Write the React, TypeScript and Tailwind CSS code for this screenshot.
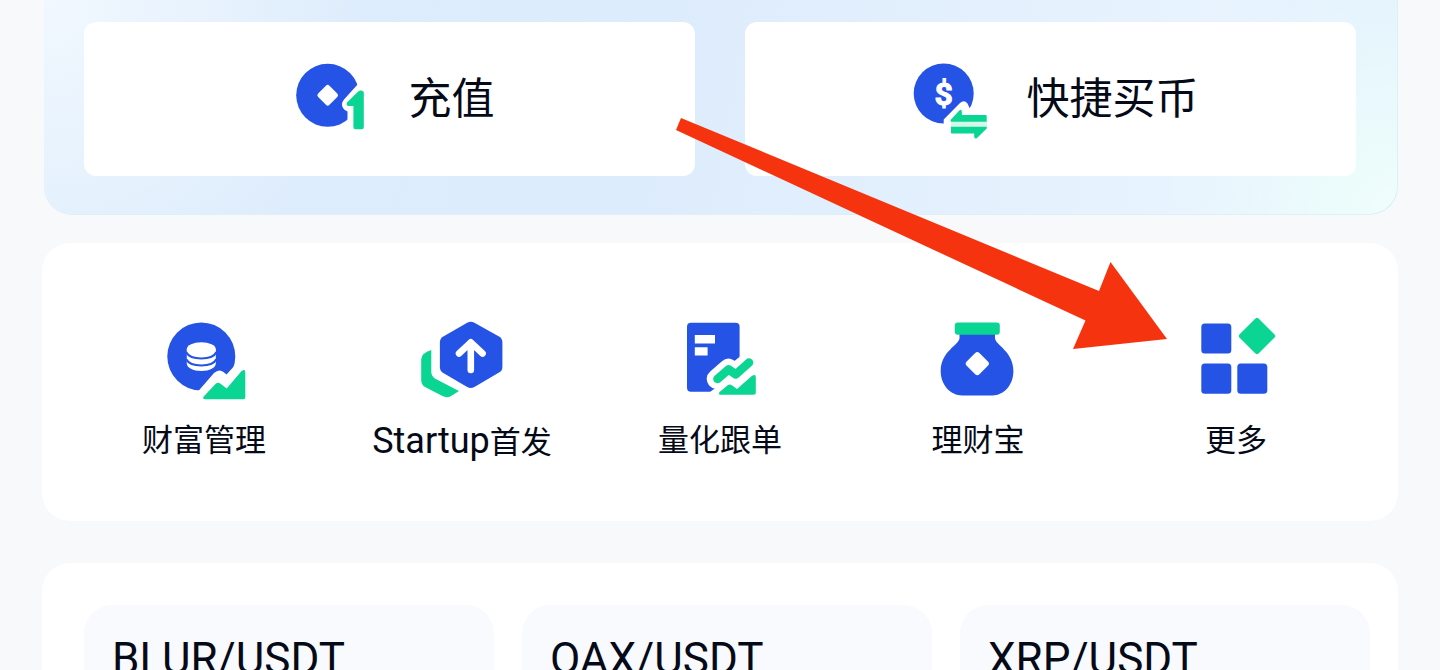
import type { ReactNode } from "react";

const BLUE = "#2453e6";
const GREEN = "#0bd592";

interface IconProps {
  children: ReactNode;
}

function ActionIcon({ children }: IconProps) {
  return (
    <svg className="size-[84px] shrink-0" viewBox="0 0 84 84" fill="none" aria-hidden="true">
      {children}
    </svg>
  );
}

function ShortcutIcon({ children }: IconProps) {
  return (
    <svg className="size-[90px]" viewBox="0 0 90 90" fill="none" aria-hidden="true">
      {children}
    </svg>
  );
}

function DepositIcon() {
  return (
    <ActionIcon>
      <circle cx="42.7" cy="38.3" r="31.5" fill={BLUE} />
      <rect x="34.7" y="30.3" width="16" height="16" rx="2.5" transform="rotate(45 42.7 38.3)" fill="#fff" />
      <path d="M73 27 59 42.5Q55.5 47 58 51Q60 54 62.5 54.5V76H84V27Z" fill="#fff" />
      <path d="M62.2 45.2 73 34.8Q74.3 33.5 76 33.5Q78.8 33.5 78.8 36V70Q78.8 72.2 76.8 72.2H70.4Q68.4 72.2 68.4 70V49H63.4Q60.4 48 62.2 45.2Z" fill={GREEN} />
    </ActionIcon>
  );
}

function QuickBuyIcon() {
  return (
    <ActionIcon>
      <circle cx="40.7" cy="36.5" r="30" fill={BLUE} />
      <text x="40.7" y="47.5" fill="#fff" stroke="#fff" strokeWidth="1" fontSize="32" fontWeight="700" textAnchor="middle" className="font-['Roboto',sans-serif]">
        $
      </text>
      <path d="M40.7 68V62.5L57 46Q61 42.5 64.5 46.5L68 54H84V68Z" fill="#fff" />
      <path d="M48 64H84V71H48Z" fill="#d5f8eb" />
      <path d="M48 62.6 56.3 53.6Q58.6 51.6 58.9 55V58H82.6Q83.7 58 83.7 59.2V64.8H48.8Q46.6 64.4 48 62.6Z" fill={GREEN} />
      <path d="M48 69.8H83.7V71.6L74 81Q71.4 82.6 71.2 79.4V76.6H49.2Q48 76.6 48 75.4Z" fill={GREEN} />
    </ActionIcon>
  );
}

function WealthIcon() {
  return (
    <ShortcutIcon>
      <circle cx="42.3" cy="41.5" r="34" fill={BLUE} />
      <path d="M27.8 34.5V48.5C27.8 52.8 34 56 42.3 56S56.8 52.8 56.8 48.5V34.5Z" fill="#fff" />
      <ellipse cx="42.3" cy="34.3" rx="14.5" ry="7" fill="#fff" />
      <path d="M27.3 37.2C29.5 41.8 35 43.4 42.3 43.4S55.1 41.8 57.3 37.2M27.3 44.2C29.5 48.8 35 50.4 42.3 50.4S55.1 48.8 57.3 44.2" stroke={BLUE} strokeWidth="2" />
      <path d="M38.5 77 55 58Q60 53.5 64.5 57L67.5 59.5 77.5 48.5H90V84H45Z" fill="#fff" />
      <path d="M44.7 81.5 56.5 69Q58.8 66.6 61.2 68.4L67.7 73.5 82.6 56Q86.3 53.4 86.3 57.4V82.3Q86.3 84.3 84.3 84.3H46.2Q43 84 44.7 81.5Z" fill={GREEN} />
    </ShortcutIcon>
  );
}

function StartupIcon() {
  return (
    <ShortcutIcon>
      <path d="M50.2 7.7Q53.8 5.7 57.4 7.7L82 21.6Q85.4 23.6 85.4 27.4V52Q85.4 55.6 82 57.6L57.4 72Q53.8 74 50.2 72L26.3 58Q22.9 56 22.9 52.2V27.2Q22.9 23.4 26.3 21.4Z" fill={BLUE} />
      <path d="M53.8 55V27.5M42 38.5 53.8 27.3 65.6 38.5" stroke="#fff" strokeWidth="6.6" strokeLinecap="round" strokeLinejoin="round" />
      <path d="M14.3 35Q4.2 38 4.2 44.5V65Q4.2 69.5 8 72L25 80.8Q30.5 83.6 35 80.6L42 76 17.8 63.5Q14.3 60.5 14.3 57Z" fill={GREEN} />
    </ShortcutIcon>
  );
}

function CopyTradeIcon() {
  return (
    <ShortcutIcon>
      <rect x="12" y="7.8" width="52.6" height="69" rx="4" fill={BLUE} />
      <path d="M19.8 20H40V28.4H19.8ZM19.8 32.3H32.6V40.5H19.8Z" fill="#fff" />
      <path d="M41.7 64 53.5 53.8 60.5 58 76 45.5" stroke="#fff" strokeWidth="20" strokeLinecap="round" strokeLinejoin="round" />
      <path d="M35 77 55 62 84 54V84H33Z" fill="#fff" />
      <path d="M42.5 64 53.5 54.4 60.8 59.4 74 47.6" stroke={GREEN} strokeWidth="8.6" strokeLinecap="round" strokeLinejoin="round" />
      <path d="M44.6 77 52.4 70.4Q54.6 68.6 56.8 70.2L62 74 76.8 61Q80.8 58.6 80.8 62.4V77.8Q80.8 79.8 78.8 79.8H46Q42.6 79.4 44.6 77Z" fill={GREEN} />
    </ShortcutIcon>
  );
}

function TreasureIcon() {
  return (
    <ShortcutIcon>
      <path d="M26.5 18V23C26.5 30 7.7 36 7.7 56C7.7 70.5 18 80.4 29 80.4H59.5C70.5 80.4 80.4 70.5 80.4 56C80.4 36 62 30 62 23V18Z" fill={BLUE} />
      <rect x="21.8" y="7.4" width="45" height="12.4" rx="3" fill={GREEN} />
      <rect x="35.3" y="39.7" width="18" height="18" rx="3" transform="rotate(45 44.3 48.7)" fill="#fff" />
    </ShortcutIcon>
  );
}

function MoreIcon() {
  return (
    <ShortcutIcon>
      <rect x="10.3" y="8.4" width="30" height="30.2" rx="3.5" fill={BLUE} />
      <rect x="10.3" y="48.6" width="30" height="30.2" rx="3.5" fill={BLUE} />
      <rect x="46.3" y="48.6" width="30" height="30.2" rx="3.5" fill={BLUE} />
      <rect x="52.5" y="7.5" width="27" height="27" rx="2.5" transform="rotate(45 66 21)" fill={GREEN} />
    </ShortcutIcon>
  );
}

const actions = [
  { label: "充值", icon: <DepositIcon /> },
  { label: "快捷买币", icon: <QuickBuyIcon /> },
];

const shortcuts = [
  { latin: "", label: "财富管理", icon: <WealthIcon /> },
  { latin: "Startup", label: "首发", icon: <StartupIcon /> },
  { latin: "", label: "量化跟单", icon: <CopyTradeIcon /> },
  { latin: "", label: "理财宝", icon: <TreasureIcon /> },
  { latin: "", label: "更多", icon: <MoreIcon /> },
];

const pairs = ["BLUR/USDT", "OAX/USDT", "XRP/USDT"];

function PointerArrow() {
  return (
    <svg
      className="pointer-events-none absolute top-[118px] left-[675px] h-[232px] w-[493px]"
      viewBox="675 118 493 232"
      aria-hidden="true"
    >
      <path d="M681 118 1099 291 1110.500 262 1167 339 1073 349 1085.500 320.500 676 130Z" fill="#f6330f" />
    </svg>
  );
}

function App() {
  return (
    <main className="relative h-screen overflow-hidden bg-[#f8f9fb] px-[42px] font-['Roboto','Noto_Sans_CJK_SC',sans-serif] text-[#050a18]">
      <section className="ml-0.5 grid grid-cols-2 gap-[50px] rounded-b-[28px] bg-[radial-gradient(circle_at_100%_100%,#effffb,transparent_240px),radial-gradient(circle_at_0%_0%,#f1f8ff,transparent_320px),linear-gradient(100deg,#deedfc,#ddecfc_45%,#e8f3fe_85%,#e2f3fd)] pt-[22px] pr-[42px] pb-[39px] pl-10 shadow-[inset_-1px_-1px_0_#dfeffa]">
        {actions.map((action) => (
          <button
            key={action.label}
            type="button"
            className="flex h-[154px] items-center justify-center gap-10 rounded-xl bg-white text-[43px] leading-[60px]"
          >
            {action.icon}
            <span>{action.label}</span>
          </button>
        ))}
      </section>

      <nav className="mt-7 grid grid-cols-5 rounded-[28px] bg-white px-[33px] pt-[72px] pb-[60px]">
        {shortcuts.map((item) => (
          <button key={item.label} type="button" className="flex flex-col items-center gap-4">
            {item.icon}
            <span className="flex h-10 items-baseline text-[31px] leading-10 whitespace-nowrap">
              {item.latin && <span className="text-[36px] leading-10">{item.latin}</span>}
              {item.label}
            </span>
          </button>
        ))}
      </nav>

      <section className="mt-[42px] grid grid-cols-3 gap-7 rounded-t-[28px] bg-white pt-[42px] pr-7 pl-[42px]">
        {pairs.map((pair) => (
          <article key={pair} className="rounded-[28px] bg-[#f9fafe] px-7 py-7">
            <h2 className="text-[44px] leading-[52px]">{pair}</h2>
          </article>
        ))}
      </section>

      <PointerArrow />
    </main>
  );
}

export default App;
